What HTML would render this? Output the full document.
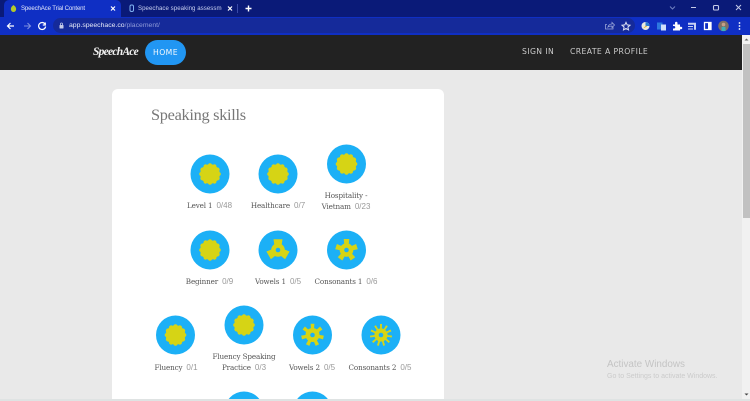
<!DOCTYPE html>
<html><head><meta charset="utf-8">
<style>
html,body{margin:0;padding:0;width:750px;height:401px;overflow:hidden;background:#e9e9e9;font-family:"Liberation Sans",sans-serif}
#w{position:relative;width:750px;height:401px;overflow:hidden}
.a{position:absolute;white-space:nowrap}
.l{position:absolute;white-space:nowrap;font-family:"DejaVu Serif","Liberation Serif",serif;font-size:7.200px;letter-spacing:-.14px;color:#555;line-height:11px;text-align:center;transform:translateX(-50%)}
.l i{font-style:normal;color:#999;font-family:"Liberation Sans",sans-serif;font-size:8px;letter-spacing:0;margin-left:4px}
.n{font-family:"DejaVu Sans",sans-serif;font-size:7.700px;line-height:12px;letter-spacing:.4px;color:#ccc}
</style></head><body><div id="w">
<svg width="0" height="0" style="position:absolute">
<defs>
<g id="sc"><circle r="19.5" fill="#1cb0f6"/><circle r="9.8" fill="#d6d415"/>
<g fill="#d6d415"><circle cx="8.9" r="1.9"/><circle cx="8.9" r="1.9" transform="rotate(30)"/><circle cx="8.9" r="1.9" transform="rotate(60)"/><circle cx="8.9" r="1.9" transform="rotate(90)"/><circle cx="8.9" r="1.9" transform="rotate(120)"/><circle cx="8.9" r="1.9" transform="rotate(150)"/><circle cx="8.9" r="1.9" transform="rotate(180)"/><circle cx="8.9" r="1.9" transform="rotate(210)"/><circle cx="8.9" r="1.9" transform="rotate(240)"/><circle cx="8.9" r="1.9" transform="rotate(270)"/><circle cx="8.9" r="1.9" transform="rotate(300)"/><circle cx="8.9" r="1.9" transform="rotate(330)"/></g></g>
<g id="g3"><circle r="19.5" fill="#1cb0f6"/><circle r="6.800" fill="#d6d415"/>
<g fill="#d6d415"><path id="b3" d="M-3.500-4-4.500-10.800 4.500-10.800 3.500-4Z"/><use href="#b3" transform="rotate(120)"/><use href="#b3" transform="rotate(240)"/></g><circle r="2.300" fill="#1cb0f6"/></g>
<g id="g5"><circle r="19.5" fill="#1cb0f6"/><circle r="6.800" fill="#d6d415"/>
<g fill="#d6d415"><path id="b5" d="M-2-4-2.800-11 2.800-11 2-4Z"/><use href="#b5" transform="rotate(72)"/><use href="#b5" transform="rotate(144)"/><use href="#b5" transform="rotate(216)"/><use href="#b5" transform="rotate(288)"/></g><circle r="2.300" fill="#1cb0f6"/></g>
<g id="g7"><circle r="19.5" fill="#1cb0f6"/><circle r="7" fill="#d6d415"/>
<g fill="#d6d415"><path id="b7" d="M-1.400-4-1.900-11.200 1.900-11.200 1.400-4Z"/><use href="#b7" transform="rotate(51.400)"/><use href="#b7" transform="rotate(102.900)"/><use href="#b7" transform="rotate(154.300)"/><use href="#b7" transform="rotate(205.700)"/><use href="#b7" transform="rotate(257.100)"/><use href="#b7" transform="rotate(308.600)"/></g><circle r="2.300" fill="#1cb0f6"/></g>
<g id="g11"><circle r="19.5" fill="#1cb0f6"/><circle r="6.600" fill="#d6d415"/>
<g fill="#d6d415"><path id="b11" d="M-.8-4-1-11 1-11 .8-4Z"/><use href="#b11" transform="rotate(32.700)"/><use href="#b11" transform="rotate(65.500)"/><use href="#b11" transform="rotate(98.200)"/><use href="#b11" transform="rotate(130.900)"/><use href="#b11" transform="rotate(163.600)"/><use href="#b11" transform="rotate(196.400)"/><use href="#b11" transform="rotate(229.100)"/><use href="#b11" transform="rotate(261.800)"/><use href="#b11" transform="rotate(294.500)"/><use href="#b11" transform="rotate(327.300)"/></g><circle r="2.300" fill="#1cb0f6"/></g>
</defs></svg>

<!-- browser chrome -->
<div class="a" style="left:0;top:0;width:750px;height:17px;background:#0a1a78"></div>
<div class="a" style="left:4px;top:0;width:117px;height:17px;background:#0f2fc4;border-radius:5px 5px 0 0"></div>
<div class="a" style="left:0;top:17px;width:750px;height:18px;background:#0f2fc4"></div>
<div class="a" style="left:53px;top:18px;width:207px;height:15px;background:#152a9a;border-radius:8px 0 0 8px"></div>
<div class="a" style="left:260px;top:18px;width:375px;height:15px;background:#152a9a;border-radius:0 8px 8px 0"></div>

<svg class="a" style="left:0;top:0" width="750" height="35" viewBox="0 0 750 35">
<path d="M13.500 5c2 1.500 3 3 2.500 5-.5 1.500-1.500 2-2.500 2s-2-.5-2.500-2c-.5-2 .5-3.500 2.500-5Z" fill="#b3c92a"/>
<path d="M111 6.500l4 4m0-4l-4 4M228 6.500l4 4m0-4l-4 4" stroke="#fff" stroke-width="1.200" fill="none"/>
<rect x="130" y="5" width="3.500" height="6.500" rx="1.500" fill="none" stroke="#7fb2f0" stroke-width="1"/>
<line x1="237.500" y1="4" x2="237.500" y2="13" stroke="#3a4aa8"/>
<path d="M245.500 8.500h6m-3-3v6" stroke="#fff" stroke-width="1.400"/>
<path d="M14 26h-6m2.500-3L7.500 26l3 3" stroke="#fff" stroke-width="1.200" fill="none"/>
<path d="M24 26h6m-2.500-3 3 3-3 3" stroke="#7d8fe0" stroke-width="1.100" fill="none"/>
<path d="M45 24a3.500 3.500 0 1 0 .6 2.500M45.300 22.500v2.500h-2.500" stroke="#fff" stroke-width="1.200" fill="none"/>
<rect x="59.500" y="25" width="4" height="3.500" rx=".5" fill="#c5cbe8"/><path d="M60.500 25v-1a1 1 0 0 1 2 0v1" stroke="#c5cbe8" fill="none" stroke-width=".8"/>
<path d="M670 6.500l2.500 2.500 2.500-2.500" stroke="#7080c0" fill="none"/>
<path d="M691 7.500h5" stroke="#c5cbe8"/>
<rect x="713.500" y="5.500" width="5" height="4.500" rx="1" stroke="#c5cbe8" fill="none" stroke-width="1.100"/>
<path d="M736 5l5 5m0-5l-5 5" stroke="#c5cbe8" stroke-width="1"/>
<path d="M607 24.500h-1.500v4.500h7.500v-2M608 27c.5-2 2-3 4-3v-1.500l2.500 2.500-2.500 2.500V26c-1.500 0-3 0-4 1Z" stroke="#9aa6d8" fill="none" stroke-width=".8"/>
<path d="M626 22.300l1.200 2.600 2.800.3-2.100 1.900.6 2.800-2.500-1.400-2.500 1.400.6-2.800-2.100-1.900 2.800-.3Z" stroke="#e3e6f5" fill="none" stroke-width="1"/>
<circle cx="645.500" cy="26" r="4" fill="#e8e8e0"/><path d="M645.500 22a4 4 0 0 1 4 4h-4Z" fill="#2a7ad0"/><path d="M643 28.500l3-3 1 1Z" fill="#e0b020"/>
<rect x="657" y="22.500" width="5.500" height="7" fill="#2d78e0"/><rect x="661" y="24.500" width="5" height="6" fill="#cfe0fa"/>
<path d="M673 24.500h2v-1.500a1.200 1.200 0 0 1 2.500 0v1.500h2.500v2.200h1a1.200 1.200 0 0 1 0 2.500h-1v1.300h-7v-2h1a1.200 1.200 0 0 0 0-2.500h-1Z" fill="#fff"/>
<path d="M688 22.800h8v7h-2v-5h-6ZM688 26h5v1h-5ZM688 28.500h5v1h-5Z" fill="#c8d0f4"/>
<rect x="704.500" y="22.500" width="6.500" height="7" fill="none" stroke="#fff" stroke-width="1.300"/><rect x="708" y="22.500" width="3.500" height="7" fill="#fff"/>
<circle cx="723.500" cy="26" r="5.300" fill="#7d6f66"/><path d="M721.500 31v-3.500c0-1 4-1 4 0V31Z" fill="#3cb0b8"/><circle cx="723.500" cy="24.500" r="1.800" fill="#c4a088"/>
<circle cx="739.500" cy="23" r=".9" fill="#fff"/><circle cx="739.500" cy="26" r=".9" fill="#fff"/><circle cx="739.500" cy="29" r=".9" fill="#fff"/>
</svg>
<div class="a" style="left:21px;top:3px;font-size:6.100px;letter-spacing:-.15px;line-height:11px;color:#e4e8fa;">SpeechAce Trial Content</div>
<div class="a" style="left:138px;top:3px;width:84px;overflow:hidden;font-size:6.100px;letter-spacing:.05px;line-height:11px;color:#c8d0f0;">Speechace speaking assessment</div>
<div class="a" style="left:69px;top:20px;font-size:6.850px;line-height:12px;color:#e8ebf8;">app.speechace.co<span style="color:#8f9bd8">/placement/</span></div>

<!-- site nav -->
<div class="a" style="left:0;top:35px;width:742px;height:35px;background:#222"></div>
<div class="a" style="left:93px;top:44px;font-family:'Liberation Serif',serif;font-style:italic;font-weight:bold;font-size:11.500px;letter-spacing:-.75px;line-height:16px;color:#f2f2f2;">SpeechAce</div>
<div class="a n" style="left:145px;top:40px;width:41px;height:25px;border-radius:12.500px;background:#2196f3;color:#f4f8fc;line-height:25px;text-align:center;">HOME</div>
<div class="a n" style="left:522px;top:46px;">SIGN IN</div>
<div class="a n" style="left:570px;top:46px;">CREATE A PROFILE</div>

<!-- scrollbar -->
<div class="a" style="left:742px;top:35px;width:8px;height:364px;background:#f1f1f1"></div>
<div class="a" style="left:743px;top:44px;width:7px;height:174px;background:#c1c1c1"></div>
<svg class="a" style="left:742px;top:35px" width="8" height="364"><path d="M2.500 5.500 4.500 3.500 6.500 5.500Z" fill="#666"/><path d="M2.500 358.500 4.500 360.500 6.500 358.500Z" fill="#444"/></svg>

<!-- card -->
<div class="a" style="left:112px;top:89px;width:332px;height:312px;background:#fff;border-radius:6px 6px 0 0"></div>
<div class="a" style="left:151px;top:105px;font-family:'Liberation Serif',serif;font-size:16.300px;letter-spacing:-.28px;line-height:20px;color:#777;">Speaking skills</div>

<svg class="a" style="left:0;top:0" width="750" height="401">
<use href="#sc" x="210" y="174"/><use href="#sc" x="278" y="174"/><use href="#sc" x="346.500" y="164"/>
<use href="#sc" x="210" y="250"/><use href="#g3" x="278" y="250"/><use href="#g5" x="346.500" y="250"/>
<use href="#sc" x="175.500" y="335"/><use href="#sc" x="244" y="325"/><use href="#g7" x="312.500" y="335"/><use href="#g11" x="381" y="335"/>
<use href="#sc" x="244" y="411"/><use href="#sc" x="312.500" y="411"/>
</svg>

<div class="l" style="left:209.500px;top:200px">Level 1<i>0/48</i></div>
<div class="l" style="left:278px;top:200px">Healthcare<i>0/7</i></div>
<div class="l" style="left:346px;top:189.500px">Hospitality -<br>Vietnam<i>0/23</i></div>
<div class="l" style="left:209.500px;top:276px">Beginner<i>0/9</i></div>
<div class="l" style="left:278px;top:276px">Vowels 1<i>0/5</i></div>
<div class="l" style="left:346px;top:276px">Consonants 1<i>0/6</i></div>
<div class="l" style="left:176px;top:361.500px">Fluency<i>0/1</i></div>
<div class="l" style="left:244px;top:350.500px">Fluency Speaking<br>Practice<i>0/3</i></div>
<div class="l" style="left:312px;top:361.500px">Vowels 2<i>0/5</i></div>
<div class="l" style="left:380px;top:361.500px">Consonants 2<i>0/5</i></div>

<!-- bottom strip -->
<div class="a" style="left:0;top:399px;width:750px;height:2px;background:#dfe3e3"></div>

<!-- watermark -->
<div class="a" style="left:607px;top:358px;font-size:9.900px;line-height:13px;color:#c4c4c4">Activate Windows</div>
<div class="a" style="left:607px;top:371px;font-size:7px;line-height:11px;color:#cbcbcb">Go to Settings to activate Windows.</div>
</div></body></html>
